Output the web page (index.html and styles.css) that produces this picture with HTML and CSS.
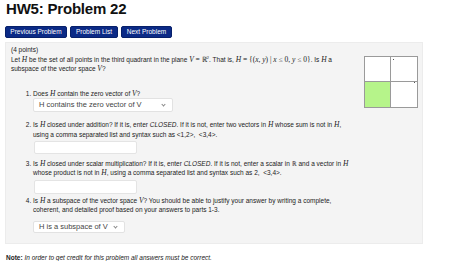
FILE: index.html
```html
<!DOCTYPE html>
<html lang="en">
<head>
    <meta charset="UTF-8">
    <title>HW5: Problem 22</title>
    <link rel="stylesheet" href="styles.css">
</head>
<body>
    <h1 class="page-title">HW5: Problem 22</h1>
    <div class="nav-buttons">
        <a class="nav-btn" href="#">Previous Problem</a>
        <a class="nav-btn" href="#">Problem List</a>
        <a class="nav-btn" href="#">Next Problem</a>
    </div>
    <div class="problem">
        <div class="problem-text">
            <p class="points">(4 points)</p>
            <p class="intro">Let <i class="m">H</i> be the set of all points in the third quadrant in the plane <i class="m">V</i> <span class="m">=</span> <span class="m">ℝ<sup>2</sup></span>. That is, <i class="m">H</i> <span class="m">= {(<i>x</i>, <i>y</i>) | <i>x</i> ≤ 0, <i>y</i> ≤ 0}</span>. Is <i class="m">H</i> a<br>subspace of the vector space <i class="m">V</i>?</p>
            <ol class="parts">
                <li class="part part-1">
                    <p>Does <i class="m">H</i> contain the zero vector of <i class="m">V</i>?</p>
                    <div class="select select-wide">H contains the zero vector of V<span class="chev"></span></div>
                </li>
                <li class="part part-2">
                    <p>Is <i class="m">H</i> closed under addition? If it is, enter <i>CLOSED</i>. If it is not, enter two vectors in <i class="m">H</i> whose sum is not in <i class="m">H</i>,<br>using a comma separated list and syntax such as &lt;1,2&gt;, &nbsp;&lt;3,4&gt;.</p>
                    <div class="answer"></div>
                </li>
                <li class="part part-3">
                    <p>Is <i class="m">H</i> closed under scalar multiplication? If it is, enter <i>CLOSED</i>. If it is not, enter a scalar in ℝ and a vector in <i class="m">H</i><br>whose product is not in <i class="m">H</i>, using a comma separated list and syntax such as 2, &nbsp;&lt;3,4&gt;.</p>
                    <div class="answer"></div>
                </li>
                <li class="part part-4">
                    <p>Is <i class="m">H</i> a subspace of the vector space <i class="m">V</i>? You should be able to justify your answer by writing a complete,<br>coherent, and detailed proof based on your answers to parts 1-3.</p>
                    <div class="select select-narrow">H is a subspace of V<span class="chev"></span></div>
                </li>
            </ol>
        </div>
        <div class="graph">
            <div class="cell"></div>
            <div class="cell"></div>
            <div class="cell cell-green"></div>
            <div class="cell"></div>
            <span class="tick tick-y"></span>
            <span class="tick tick-x"></span>
        </div>
    </div>
    <p class="note"><b>Note:</b> <i>In order to get credit for this problem all answers must be correct.</i></p>
</body>
</html>
```

FILE: styles.css
```css
body{
    margin:0px;
    padding:0px 5px;
    font-family:"Liberation Sans", Arial, sans-serif;
    font-size:6.5px;
    color:#222;
    background-color:#fff;
}

.page-title{
    margin:0px 0px 0px 1px;
    font-size:15px;
    line-height:18px;
    font-weight:bold;
    letter-spacing:-0.2px;
    color:#111;
}

.nav-buttons{
    display:flex;
    gap:3px;
    margin-top:8px;
}

.nav-btn{
    display:block;
    height:10px;
    line-height:10px;
    padding:0px 4px;
    background-color:#0b2a86;
    border:1px solid #07206a;
    border-radius:2px;
    color:#fff;
    font-size:6.5px;
    text-align:center;
    text-decoration:none;
    white-space:nowrap;
}
.nav-btn:first-child{ width:52px; }
.nav-btn:nth-child(2){ width:38px; }
.nav-btn:nth-child(3){ width:41px; }

.problem{
    display:flex;
    margin-top:4px;
    width:418px;
    box-sizing:border-box;
    padding:2px 4px 10px 5px;
    background-color:#f4f4f4;
    border:1px solid #ececec;
}

.problem-text{
    flex:1;
}

.problem p{
    margin:0px;
    line-height:9.6px;
    white-space:nowrap;
}

.m{
    font-family:"Liberation Serif", "Times New Roman", serif;
    font-size:7.5px;
    line-height:1;
}
i.m, .m i{
    font-style:italic;
}
.m sup{
    font-size:5px;
    line-height:0;
}

.parts{
    margin:15px 0px 0px 0px;
    padding:0px 0px 0px 22px;
}

.part-2{ margin-top:8px; }
.part-3{ margin-top:5px; }
.part-4{ margin-top:2px; }

.select{
    position:relative;
    box-sizing:border-box;
    height:14px;
    line-height:12px;
    padding:0px 5px;
    background-color:#fff;
    border:1px solid #e2e2e2;
    border-radius:2px;
    color:#444;
    font-size:7.5px;
}
.select-wide{ width:140px; margin-top:0px; }
.select-narrow{ width:92px; height:12px; line-height:10px; margin-top:6px; }

.chev{
    position:absolute;
    right:7px;
    top:4px;
    width:2px;
    height:2px;
    border-right:1px solid #888;
    border-bottom:1px solid #888;
    transform:rotate(45deg);
}
.select-narrow .chev{ top:3px; }

.answer{
    width:103px;
    height:13px;
    box-sizing:border-box;
    margin-left:1px;
    background-color:#fff;
    border:1px solid #e4e4e4;
    border-radius:2px;
}
.part-2 .answer{ margin-top:1px; }
.part-3 .answer{ margin-top:2px; height:14px; }

.graph{
    position:relative;
    display:grid;
    grid-template-columns:26px 26px;
    grid-template-rows:25px 25px;
    align-self:flex-start;
    margin-top:11px;
    border:1px solid #9a9a9a;
    background-color:#fff;
}

.cell{
    border-right:1px solid #9a9a9a;
    border-bottom:1px solid #9a9a9a;
}
.cell:nth-child(2), .cell:nth-child(4){ border-right:none; }
.cell:nth-child(3), .cell:nth-child(4){ border-bottom:none; }
.cell-green{ background-color:#b6f48a; }

.tick{
    position:absolute;
    width:1px;
    height:1px;
    background-color:#555;
}
.tick-y{ left:28px; top:2px; }
.tick-x{ right:2px; top:25px; }

.note{
    margin:10px 0px 0px 1px;
    font-size:6.5px;
    color:#222;
}
.note b{
    font-weight:bold;
}
```
